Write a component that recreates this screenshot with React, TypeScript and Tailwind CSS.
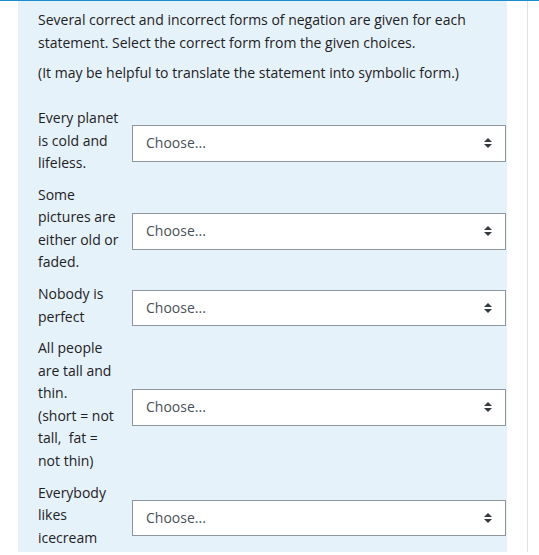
const items = [
  'Every planet is cold and lifeless.',
  'Some pictures are either old or faded.',
  'Nobody is perfect',
  'All people are tall and thin.\n(short = not tall,  fat = not thin)',
  'Everybody likes icecream',
];

function SelectArrow() {
  return (
    <svg width="8" height="10" viewBox="0 0 4 5" className="shrink-0">
      <path fill="#343a40" d="M2 0L0 2h4zm0 5L0 3h4z" />
    </svg>
  );
}

function ChooseSelect() {
  return (
    <div className="mt-[5px] flex h-[36.5px] flex-1 items-center justify-between border border-[#8f959e] bg-white pl-[13px] pr-[13px] text-[#495057]">
      <span>Choose...</span>
      <SelectArrow />
    </div>
  );
}

export default function App() {
  return (
    <div
      className="flex h-[555px] w-[539px] border-t border-[#1b8ccb] bg-white text-[14px] leading-[22.5px] text-[#1d2125]"
      style={{ fontFamily: '"Open Sans", "Noto Sans", sans-serif' }}
    >
      <div className="w-[18px] shrink-0" />
      <div className="h-[551px] w-[489px] shrink-0 bg-[#e6f2f9] pb-[3px] pl-[20px] pr-px pt-[8px]">
        <div className="pr-[19px]">
          <p className="mb-[8px]">
            Several correct and incorrect forms of negation are given for each statement. Select the correct form
            from the given choices.
          </p>
          <p>(It may be helpful to translate the statement into symbolic form.)</p>
        </div>
        <div className="mt-[22.5px] flex flex-col gap-[9.25px]">
          {items.map((text) => (
            <div key={text} className="flex items-center">
              <div className="w-[94px] shrink-0 whitespace-pre-wrap pr-[10px]">{text}</div>
              <ChooseSelect />
            </div>
          ))}
        </div>
      </div>
      <div className="w-[20px] shrink-0" />
      <div className="h-[551px] w-px shrink-0 bg-[#dee2e6]" />
    </div>
  );
}
